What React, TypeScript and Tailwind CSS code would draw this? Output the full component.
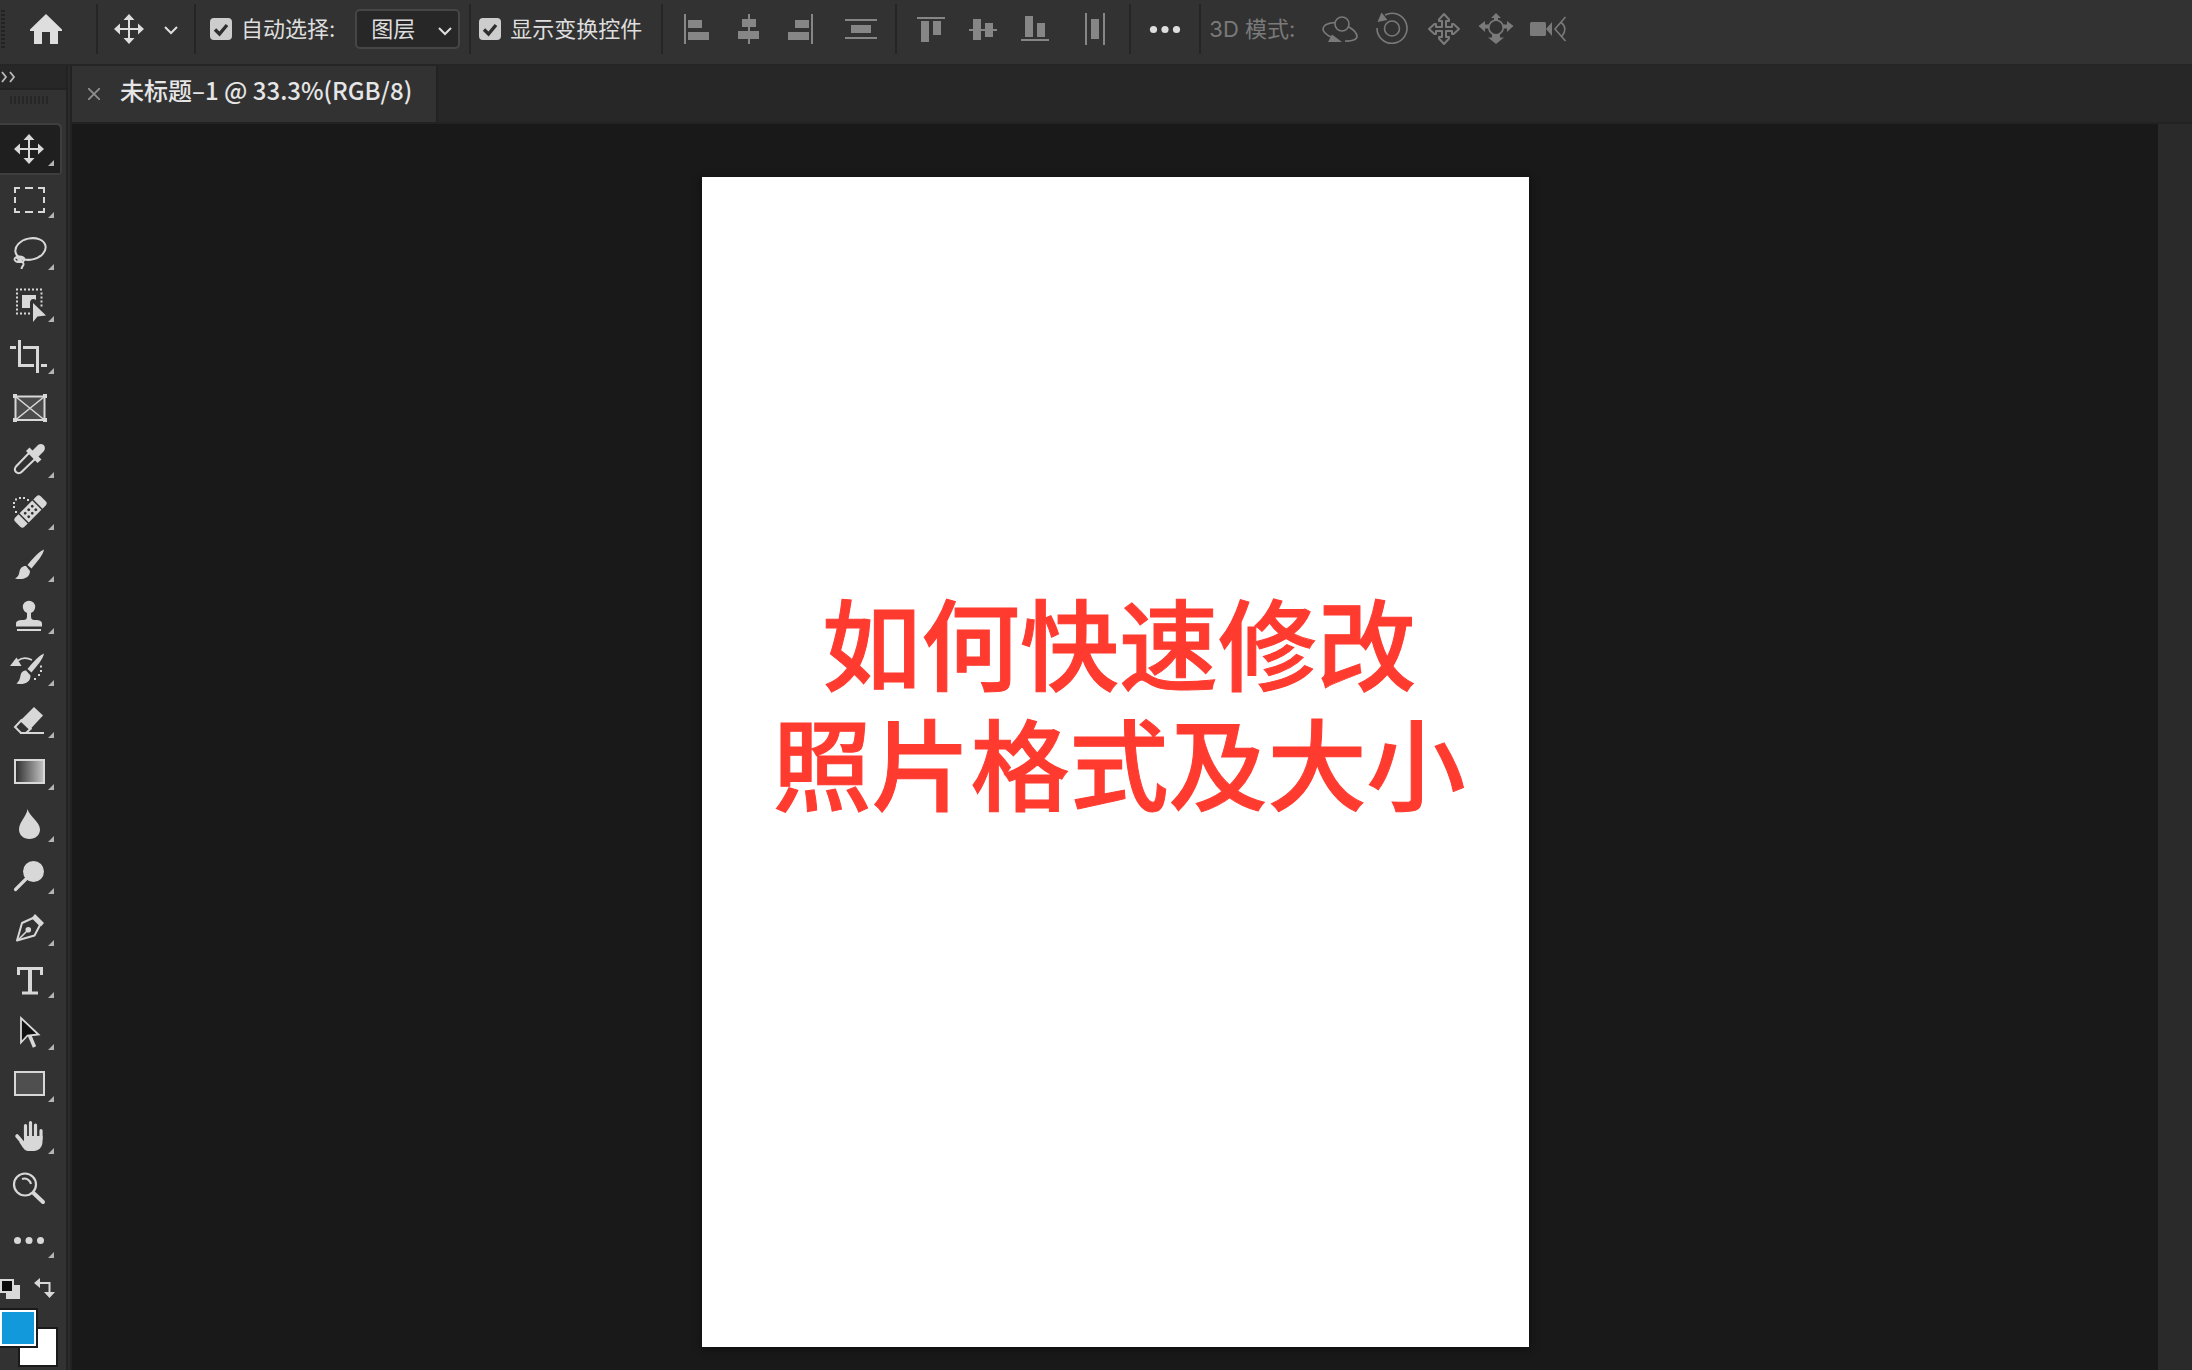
import { useState } from 'react';
import type { ReactNode } from 'react';

interface Tool {
  name: string;
  flyout?: boolean; // small corner triangle
  icon: ReactNode;
}

// Four-way arrow, shared by the options bar and the tool list
const MoveGlyph = () => (
  <g fill="currentColor">
    <path d="M28 16h2v9h9v2h-9v9h-2v-9h-9v-2h9z" />
    <path d="M29 11l5.5 6h-11zM29 41l5.5-6h-11zM14 26l6-5.500v11zM44 26l-6-5.500v11z" />
  </g>
);

const TOOLS: Tool[] = [
  { name: '移动工具', flyout: true, icon: <MoveGlyph /> },
  {
    name: '矩形选框工具',
    flyout: true,
    icon: (
      <path
        d="M15 18v-5h5M25 13h8M38 13h6v5M44 22v6M44 33v4h-6M33 37h-8M20 37h-5v-4M15 28v-6"
        fill="none"
        stroke="currentColor"
        strokeWidth="2"
      />
    ),
  },
  {
    name: '套索工具',
    flyout: true,
    icon: (
      <g fill="none" stroke="currentColor" strokeWidth="2">
        <ellipse cx="30.500" cy="22" rx="15.300" ry="10.600" transform="rotate(-12 30.5 22)" />
        <ellipse cx="19.500" cy="32.300" rx="5" ry="2.800" />
        <path d="M16 30c2 3 8 4 7.500 7.500c-.3 1.500-2 2-2 4.500M17.500 34c2-.5 4-2 5-4" />
      </g>
    ),
  },
  {
    name: '对象选择工具',
    flyout: true,
    icon: (
      <g fill="currentColor">
        <path d="M16 10.500h27M16 34.500h15" stroke="currentColor" strokeWidth="2" strokeDasharray="2 2" />
        <path d="M17 13.500v20M41.500 13.500v16" stroke="currentColor" strokeWidth="2" strokeDasharray="2 2" />
        <path d="M22 16h14v5c-3-2-6-.5-6 3v5h-8z" />
        <path d="M33 24v19l4.500-5.500L46 36.500z" />
      </g>
    ),
  },
  {
    name: '裁剪工具',
    flyout: true,
    icon: (
      <path
        d="M10 16.500h6M19.500 9v25.500H34M23 16.500h14.500V42M41 34.500h6"
        fill="none"
        stroke="currentColor"
        strokeWidth="3"
      />
    ),
  },
  {
    name: '图框工具',
    icon: (
      <g fill="none" stroke="currentColor" strokeWidth="2">
        <path d="M15.500 13.500h29v23.500h-29z" fill="#4b4b4b" />
        <path d="M15.500 13.500l29 23.500M44.500 13.500L15.500 37" strokeWidth="1.600" />
        <path
          d="M13 11h4v4h-4zM43 11h4v4h-4zM13 35h4v4h-4zM43 35h4v4h-4z"
          fill="currentColor"
          stroke="none"
        />
      </g>
    ),
  },
  {
    name: '吸管工具',
    flyout: true,
    icon: (
      <g>
        <path
          d="M29 18L16 31.500c-1.500 2-1.500 4 0 5.500s4 1.500 5.500 0L35 24"
          fill="none"
          stroke="currentColor"
          strokeWidth="2"
        />
        <path
          d="M26 16l3.500-3.500 3 3 5.500-5.500c4-3 9 1 6 6l-5.500 5.500 3 3L37.500 28z"
          fill="currentColor"
        />
      </g>
    ),
  },
  {
    name: '污点修复画笔工具',
    flyout: true,
    icon: (
      <g>
        <g fill="currentColor" transform="rotate(-45 30.500 24.500)">
          <path d="M20 18v13h-4.500a3 3 0 0 1-3-3v-7a3 3 0 0 1 3-3zM41 18v13h4.500a3 3 0 0 0 3-3v-7a3 3 0 0 0-3-3z" />
          <path d="M21.500 18h18v13h-18z" />
        </g>
        <g fill="#323232" transform="rotate(-45 30.500 24.500)">
          <circle cx="25.500" cy="22" r="1.400" />
          <circle cx="30.500" cy="22" r="1.400" />
          <circle cx="35.500" cy="22" r="1.400" />
          <circle cx="25.500" cy="27" r="1.400" />
          <circle cx="30.500" cy="27" r="1.400" />
          <circle cx="35.500" cy="27" r="1.400" />
        </g>
        <path
          d="M15 24h2v2h-2zM13 19h2v2h-2zM13 15h2v2h-2zM15 11.500h2v2h-2zM19 10h2v2h-2zM23 10h2v2h-2zM27 12h2v2h-2z"
          fill="currentColor"
        />
      </g>
    ),
  },
  {
    name: '画笔工具',
    flyout: true,
    icon: (
      <g fill="currentColor">
        <path d="M44 10.500c-5 2-11 9-16.500 15.500l4 3.500C37 23 43 16 44 10.500z" />
        <path d="M26 27c-3-.5-6 2-6.500 5.500S18 38 15 39.500c6 1.500 15 .5 15-7.500z" />
      </g>
    ),
  },
  {
    name: '仿制图章工具',
    flyout: true,
    icon: (
      <g fill="currentColor">
        <circle cx="29" cy="16" r="6.200" />
        <path d="M27 20h4v5c0 3 1 4 4 4 5 0 7 1 7 4v2.500H16V33c0-3 2-4 7-4 3 0 4-1 4-4z" />
        <path d="M17 38h24v2H17z" />
      </g>
    ),
  },
  {
    name: '历史记录画笔工具',
    flyout: true,
    icon: (
      <g fill="currentColor">
        <path d="M44 10.500c-5 2-11 9-16.500 15.500l4 3.500C37 23 43 16 44 10.500z" />
        <path d="M26 27.500c-3-.5-5 2-5.500 5s-1.500 6-4 8c6 1.500 14 0 14-8z" />
        <path d="M10 23l6.500-8.500L21.500 23z" />
        <path d="M18 17.500c4-3 9-3 14-.5" fill="none" stroke="currentColor" strokeWidth="1.600" />
        <path d="M40 22.500h2v2h-2zM40 27h2v2h-2zM38 31h2v2h-2zM34 35h2v2h-2z" />
      </g>
    ),
  },
  {
    name: '橡皮擦工具',
    flyout: true,
    icon: (
      <g>
        <path d="M34 12l9 8.500-13.500 14.500-9.500-9z" fill="currentColor" />
        <path
          d="M22 24.500l-7 7.500 6 6h5l5.500-5M20 38h24"
          fill="none"
          stroke="currentColor"
          strokeWidth="2"
        />
      </g>
    ),
  },
  {
    name: '渐变工具',
    flyout: true,
    icon: (
      <g>
        <defs>
          <linearGradient id="toolGradient">
            <stop offset="0" stopColor="#2c2c2c" />
            <stop offset="1" stopColor="#c4c4c4" />
          </linearGradient>
        </defs>
        <path
          d="M15 13h29v23H15z"
          fill="url(#toolGradient)"
          stroke="currentColor"
          strokeWidth="2"
        />
      </g>
    ),
  },
  {
    name: '模糊工具',
    flyout: true,
    icon: (
      <path
        d="M27.500 10c1.500 7 12.500 13 12.500 20.500C40 36 35.500 40 29.500 40S19 36 19 30.500C19 23 27 17 27.500 10z"
        fill="currentColor"
      />
    ),
  },
  {
    name: '减淡工具',
    flyout: true,
    icon: (
      <g>
        <circle cx="33.500" cy="20.500" r="10.500" fill="currentColor" />
        <path d="M27 27L15.500 38.500" stroke="currentColor" strokeWidth="3.200" strokeLinecap="round" />
      </g>
    ),
  },
  {
    name: '钢笔工具',
    flyout: true,
    icon: (
      <g>
        <path
          d="M33 15l-11 5-5 17.500 17.500-5L40 22z"
          fill="none"
          stroke="currentColor"
          strokeWidth="2"
          strokeLinejoin="round"
        />
        <path d="M18 37l9-9" stroke="currentColor" strokeWidth="1.600" />
        <circle cx="28.300" cy="26.700" r="2.800" fill="currentColor" />
        <path d="M32 14.500l3-3.500 9 9-3 3.500z" fill="currentColor" />
      </g>
    ),
  },
  {
    name: '横排文字工具',
    flyout: true,
    icon: (
      <g fill="none" stroke="currentColor">
        <path d="M18.500 20v-6.500h23V20" strokeWidth="3" />
        <path d="M30 13.500v24" strokeWidth="4" />
        <path d="M22 38h16" strokeWidth="3" />
      </g>
    ),
  },
  {
    name: '路径选择工具',
    flyout: true,
    icon: (
      <g>
        <path d="M29 27l5.500 13" stroke="currentColor" strokeWidth="3.600" />
        <path d="M21 11v24.500l6.500-7 11-1z" fill="#111" stroke="currentColor" strokeWidth="1.800" />
      </g>
    ),
  },
  {
    name: '矩形工具',
    flyout: true,
    icon: <path d="M15 13h29v23H15z" fill="#4f4f4f" stroke="currentColor" strokeWidth="2" />,
  },
  {
    name: '抓手工具',
    flyout: true,
    icon: (
      <g fill="none" stroke="currentColor" strokeLinecap="round" strokeWidth="3.200">
        <path d="M25.500 26V14.500M30.500 25V11.500M35.500 26V14M41 28V19.500" />
        <path d="M17 25l6 7" strokeWidth="3.600" />
        <path
          d="M24 25h18.500v6c0 5-4 9-8.500 9h-6c-3.500 0-5.500-4-9-9.500l5 .5z"
          fill="currentColor"
          stroke="none"
        />
      </g>
    ),
  },
  {
    name: '缩放工具',
    icon: (
      <g fill="none" stroke="currentColor">
        <circle cx="25" cy="21.500" r="11" strokeWidth="2.200" />
        <path d="M22 16c4-1.500 8 1 9 5" strokeWidth="2" />
        <path d="M33.500 30l9.500 9" strokeWidth="4" strokeLinecap="round" />
      </g>
    ),
  },
  {
    name: '编辑工具栏',
    flyout: true,
    icon: (
      <g fill="currentColor">
        <circle cx="17.500" cy="25.500" r="3.500" />
        <circle cx="29" cy="25.500" r="3.500" />
        <circle cx="40.500" cy="25.500" r="3.500" />
      </g>
    ),
  },
];

const ALIGN_HORIZONTAL = [
  { name: '左对齐', d: 'M13 14h2v30h-2zM17 20h14v8H17zM17 32h21v8H17z' },
  { name: '水平居中对齐', d: 'M25 14h2v30h-2zM19 19h14v8H19zM15 31h21v8H15z' },
  { name: '右对齐', d: 'M36 14h2v30h-2zM20 20h14v8H20zM13 32h21v8H13z' },
];

const ALIGN_VERTICAL = [
  { name: '顶对齐', d: 'M12 17h28v2H12zM16 21h8v21h-8zM28 21h8v14h-8z' },
  { name: '垂直居中对齐', d: 'M12 29h28v2H12zM16 19h8v21h-8zM28 23h8v14h-8z' },
  { name: '底对齐', d: 'M12 39h28v2H12zM16 16h8v21h-8zM28 23h8v14h-8z' },
];

const MODES_3D: { name: string; icon: ReactNode }[] = [
  {
    name: '环绕移动 3D 相机',
    icon: (
      <>
        <circle cx="29" cy="24" r="7" />
        <path d="M22 22.500c-6 .5-12 2.500-12 6.500 0 2.500 3 5.500 8 8M36 27c5 3 8 6.500 8 9.500s-5 5-12 4.500" />
        <path d="M15 42l4-7.500L29 42z" fill="currentColor" stroke="none" />
      </>
    ),
  },
  {
    name: '滚动 3D 相机',
    icon: (
      <>
        <circle cx="27" cy="28.500" r="7.500" />
        <path d="M12 28a15 15 0 1 0 8-13" />
        <path d="M12.500 22l4-9.500 6 7.500z" fill="currentColor" stroke="none" />
      </>
    ),
  },
  {
    name: '平移 3D 相机',
    icon: (
      <>
        <path
          d="M27 14l5 5.500V21h-3v6h6v-3h1.500l5.500 5-5.500 5H35v-3h-6v6h3v1.500L27 44l-5-5.500V37h3v-6h-6v3h-1.500L12 29l5.500-5H19v3h6v-6h-3v-1.500z"
          strokeWidth="2"
          strokeLinejoin="round"
        />
      </>
    ),
  },
  {
    name: '滑动 3D 相机',
    icon: (
      <>
        <circle cx="27" cy="27.500" r="7.200" />
        <path
          d="M27 13l5 5h-3v3h-4v-3h-3zM9.500 26l6.500-5v3.500h4v4h-4V32zM44.500 26L38 21v3.500h-4v4h4V32zM27 44l8-6.500h-4V34h-8v3.500h-4z"
          fill="currentColor"
          stroke="none"
        />
      </>
    ),
  },
  {
    name: '变焦 3D 相机',
    icon: (
      <>
        <rect x="9" y="22" width="16" height="14" rx="1.500" fill="currentColor" stroke="none" />
        <path d="M25 29l6-7v14z" fill="currentColor" stroke="none" />
        <path d="M44.500 17L34 29l10.500 12M40 22.500c5 3.500 5 9 1 13.500" />
      </>
    ),
  },
];

const Separator = () => <div className="h-[50px] w-[2px] shrink-0 bg-[#252525]" />;

function OptionButton({ name, children }: { name: string; children: ReactNode }) {
  return (
    <button aria-label={name} className="block shrink-0">
      <svg width="52" height="58" viewBox="0 0 52 58" className="block">
        {children}
      </svg>
    </button>
  );
}

function Check({ label, checked, onChange }: { label: string; checked: boolean; onChange: () => void }) {
  return (
    <label className="flex shrink-0 items-center gap-[9px] whitespace-nowrap">
      <span className="relative block size-[22px]">
        <input
          type="checkbox"
          checked={checked}
          onChange={onChange}
          className="block size-[22px] appearance-none rounded-[4px] border-2 border-[#cdcdcd] checked:bg-[#cdcdcd]"
        />
        {checked && (
          <svg viewBox="0 0 22 22" className="pointer-events-none absolute inset-0">
            <path d="M5 11.500l4.500 4.500L17 7" fill="none" stroke="#2e2e2e" strokeWidth="3.400" />
          </svg>
        )}
      </span>
      {label}
    </label>
  );
}

export default function App() {
  const [activeTool, setActiveTool] = useState(TOOLS[0].name);
  const [autoSelect, setAutoSelect] = useState(true);
  const [showTransform, setShowTransform] = useState(true);

  return (
    <div className="flex min-h-screen flex-col bg-[#191919] font-['Inter','Noto_Sans_CJK_SC',sans-serif] text-[#dedede]">
      {/* Options bar */}
      <header className="flex h-[66px] items-center border-b-2 border-[#252525] bg-[#323232] pb-[6px] text-[22px] leading-[32px]">
        <div className="flex w-[96px] shrink-0 items-center">
          <svg width="6" height="40" viewBox="0 0 6 40">
            <path d="M3 1v38" stroke="#222" strokeWidth="4" strokeDasharray="2 2" />
          </svg>
          <button aria-label="主页" className="ml-6">
            <svg width="32" height="30" viewBox="0 0 32 30" fill="currentColor" className="block">
              <path d="M16 0l16 15.500v1.500h-4v13h-8V18h-8v12H4V17H0v-1.500z" />
            </svg>
          </button>
        </div>
        <Separator />
        <div className="flex w-[96px] shrink-0 items-center pl-[2px]">
          <button aria-label="移动工具预设" className="flex items-center">
            <svg width="58" height="52" viewBox="0 0 58 52">
              <MoveGlyph />
            </svg>
            <svg width="26" height="14" viewBox="0 0 26 14">
              <path d="M7 5l6 6 6-6" fill="none" stroke="currentColor" strokeWidth="2" />
            </svg>
          </button>
        </div>
        <Separator />
        <div className="flex shrink-0 items-center gap-5 pr-[9px] pl-[14px]">
          <Check label="自动选择:" checked={autoSelect} onChange={() => setAutoSelect(!autoSelect)} />
          <span className="relative block">
            <select
              aria-label="自动选择"
              className="block h-10 w-[105px] appearance-none rounded-[5px] border-2 border-[#464646] bg-[#272727] pl-[14px] text-[22px]"
            >
              <option>图层</option>
              <option>组</option>
            </select>
            <svg
              viewBox="0 0 14 10"
              className="pointer-events-none absolute top-[17px] right-2 h-[10px] w-[14px]"
            >
              <path d="M1 2l6 6 6-6" fill="none" stroke="currentColor" strokeWidth="2" />
            </svg>
          </span>
        </div>
        <Separator />
        <div className="shrink-0 pr-[19px] pl-2">
          <Check
            label="显示变换控件"
            checked={showTransform}
            onChange={() => setShowTransform(!showTransform)}
          />
        </div>
        <Separator />
        <div className="flex shrink-0 px-2 text-[#868686]">
          {ALIGN_HORIZONTAL.map(({ name, d }) => (
            <OptionButton key={name} name={name}>
              <path d={d} fill="currentColor" />
            </OptionButton>
          ))}
          <div className="ml-2">
            <OptionButton name="垂直分布">
              <path d="M10 19h32v2H10zM16 25h20v8H16zM10 37h32v2H10z" fill="currentColor" />
            </OptionButton>
          </div>
        </div>
        <Separator />
        <div className="flex shrink-0 px-2 text-[#868686]">
          {ALIGN_VERTICAL.map(({ name, d }) => (
            <OptionButton key={name} name={name}>
              <path d={d} fill="currentColor" />
            </OptionButton>
          ))}
          <div className="ml-2">
            <OptionButton name="水平分布">
              <path d="M16 13h2v32h-2zM22 19h8v20h-8zM34 13h2v32h-2z" fill="currentColor" />
            </OptionButton>
          </div>
        </div>
        <Separator />
        <div className="shrink-0 px-2">
          <OptionButton name="更多选项">
            <g fill="currentColor">
              <circle cx="14.500" cy="29.500" r="3.600" />
              <circle cx="26" cy="29.500" r="3.600" />
              <circle cx="37.500" cy="29.500" r="3.600" />
            </g>
          </OptionButton>
        </div>
        <Separator />
        <div className="flex shrink-0 items-center pl-2 text-[#7a7a7a]">
          <span className="w-[104px] whitespace-nowrap">3D 模式:</span>
          {MODES_3D.map(({ name, icon }) => (
            <OptionButton key={name} name={name}>
              <g fill="none" stroke="currentColor" strokeWidth="1.600">
                {icon}
              </g>
            </OptionButton>
          ))}
        </div>
      </header>

      <div className="flex flex-1">
        {/* Tools */}
        <aside className="flex w-[68px] shrink-0 flex-col border-r-2 border-[#222] bg-[#323232] text-[#d8d8d8]">
          <button
            aria-label="展开面板"
            className="flex h-6 items-center border-b-2 border-[#222] bg-[#272727]"
          >
            <svg width="18" height="12" viewBox="0 0 18 12">
              <path d="M2 1l4 5-4 5M10 1l4 5-4 5" fill="none" stroke="#bbb" strokeWidth="1.800" />
            </svg>
          </button>
          <div className="h-[33px] pt-[6px] pl-[10px]">
            <svg width="40" height="8" viewBox="0 0 40 8">
              <path d="M0 4h40" stroke="#262626" strokeWidth="8" strokeDasharray="2 2" />
            </svg>
          </div>
          {TOOLS.map(({ name, flyout, icon }) => (
            <button
              key={name}
              aria-label={name}
              onClick={() => setActiveTool(name)}
              className={`h-[52px] w-[62px] ${
                activeTool === name
                  ? 'rounded-r-[4px] bg-[#1f1f1f] shadow-[inset_-2px_2px_#3e3e3e,inset_0_-2px_#3e3e3e]'
                  : ''
              }`}
            >
              <svg width="62" height="52" viewBox="0 0 62 52" className="block">
                {icon}
                {flyout && <path d="M54 37v6h-6z" fill="#b4b4b4" />}
              </svg>
            </button>
          ))}
          <div className="flex">
            <button aria-label="默认前景色和背景色">
              <svg width="31" height="40" viewBox="0 0 31 40" className="block">
                <path d="M6 18h14v14H6z" fill="currentColor" />
                <path d="M1 13h12v12H1z" fill="#0a0a0a" stroke="currentColor" strokeWidth="2" />
              </svg>
            </button>
            <button aria-label="切换前景色和背景色">
              <svg width="31" height="40" viewBox="0 0 31 40" className="block">
                <path d="M8 16h10.500v10" fill="none" stroke="currentColor" strokeWidth="2" />
                <path d="M3 16l6-5v10zM13 25h11l-5.500 6z" fill="currentColor" />
              </svg>
            </button>
          </div>
          {/* Foreground swatch lies over the background one */}
          <div className="relative h-[63px]">
            <button
              aria-label="背景色"
              className="absolute top-5 left-[18px] size-10 border-2 border-[#1a1a1a] bg-white"
            />
            <button
              aria-label="前景色"
              className="absolute top-[1px] -left-[2px] size-10 border-2 border-[#1a1a1a] bg-[#1299dc] inset-ring-2 inset-ring-white"
            />
          </div>
        </aside>

        {/* Document window */}
        <main className="flex flex-1 flex-col border-l-2 border-[#2b2b2b]">
          <nav className="flex h-[58px] border-b-2 border-l-2 border-[#222] bg-[#272727]">
            <div className="flex items-center gap-5 border-r-2 border-[#222] bg-[#323232] pr-6 pl-4">
              <button aria-label="关闭">
                <svg width="12" height="12" viewBox="0 0 12 12" className="block">
                  <path d="M0 0l12 12M12 0L0 12" stroke="#8e8e8e" strokeWidth="1.800" />
                </svg>
              </button>
              <h1 className="pb-2 font-['Noto_Sans_CJK_SC',sans-serif] text-[24px] leading-[32px] font-medium whitespace-nowrap text-[#e6e6e6]">
                未标题–1 @ 33.3%(RGB/8)
              </h1>
            </div>
          </nav>
          <div className="flex flex-1">
            <section className="flex flex-1 justify-center border-l-2 border-[#222] pt-[53px] pb-[23px]">
              <div className="flex aspect-[827/1170] items-center justify-center bg-white pb-[106px] pl-2 shadow-[0_2px_8px_#0e0e0e]">
                <p className="text-center font-['Liberation_Sans','Noto_Sans_CJK_SC',sans-serif] text-[99px] leading-[120px] font-medium whitespace-nowrap text-[#ff3b30] [-webkit-text-stroke:1px_#ff3b30]">
                  如何快速修改
                  <br />
                  照片格式及大小
                </p>
              </div>
            </section>
            <div className="w-[34px] shrink-0 bg-[#2a2a2a]" />
          </div>
        </main>
      </div>
    </div>
  );
}
